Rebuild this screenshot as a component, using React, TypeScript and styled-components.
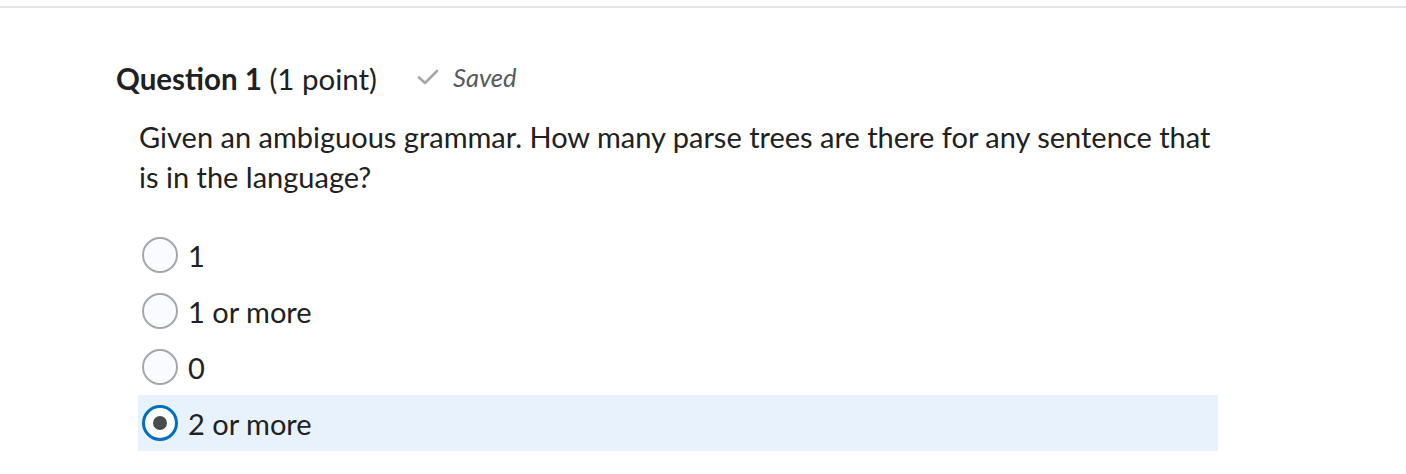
import React, { useState } from 'react'
import styled, { createGlobalStyle } from 'styled-components'

const GlobalStyle = createGlobalStyle`
  html, body {
    margin: 0;
    padding: 0;
    background: #ffffff;
  }
  body {
    font-family: Lato, "Open Sans", sans-serif;
    color: #202122;
  }
`

const options = ['1', '1 or more', '0', '2 or more']

const App = () => {
  const [picked, setPicked] = useState(3)

  return (
    <>
      <GlobalStyle />
      <Page>
        <TopRule />
        <QuestionBlock>
          <QuestionHeader>
            <Title>
              <strong>Question 1</strong> (1 point)
            </Title>
            <SavedTag>
              <svg width="22" height="18" viewBox="0 0 22 18">
                <path d="M2 9.5 L8 15 L20 3" fill="none" stroke="#a5a8ab" strokeWidth="2.6" strokeLinecap="round" strokeLinejoin="round" />
              </svg>
              <span>Saved</span>
            </SavedTag>
          </QuestionHeader>

          <QuestionBody>
            <Prompt>
              Given an ambiguous grammar. How many parse trees are there for any sentence that is in the language?
            </Prompt>

            <OptionList>
              {options.map((opt, i) => (
                <OptionRow key={opt} selected={picked === i} onClick={() => setPicked(i)}>
                  <Radio selected={picked === i} />
                  <OptionLabel>{opt}</OptionLabel>
                </OptionRow>
              ))}
            </OptionList>
          </QuestionBody>
        </QuestionBlock>
      </Page>
    </>
  )
}

export default App

const Page = styled.div`
  width: 1406px;
  height: 474px;
  overflow: hidden;
  padding-top: 6px;
  box-sizing: border-box;
`

const TopRule = styled.div`
  height: 2px;
  background: #e3e7ec;
`

const QuestionBlock = styled.div`
  padding: 50px 0 0 116px;
`

const QuestionHeader = styled.div`
  display: flex;
  align-items: center;
  gap: 40px;
  height: 40px;
`

const Title = styled.h2`
  margin: 0;
  font-size: 29.5px;
  font-weight: 400;
  color: #202122;

  strong {
    font-weight: 700;
  }
`

const SavedTag = styled.div`
  display: flex;
  align-items: center;
  gap: 14px;
  font-size: 25.5px;
  font-style: italic;
  color: #565a5c;
  margin-top: -2px;
`

const QuestionBody = styled.div`
  padding-left: 23px;
  width: 1079px;
`

const Prompt = styled.p`
  margin: 19px 0 0 0;
  font-size: 29px;
  line-height: 40px;
  color: #202122;
`

const OptionList = styled.div`
  margin-top: 30px;
  margin-left: -1px;
  display: flex;
  flex-direction: column;
`

const OptionRow = styled.label<{ selected: boolean }>`
  display: flex;
  align-items: center;
  gap: 10px;
  height: 56px;
  padding-left: 4px;
  background: ${p => (p.selected ? '#e8f2fc' : 'transparent')};
  cursor: pointer;
`

const Radio = styled.span<{ selected: boolean }>`
  width: 36px;
  height: 36px;
  border-radius: 50%;
  box-sizing: border-box;
  flex-shrink: 0;
  background: ${p => (p.selected ? '#ffffff' : '#f9fbff')};
  border: ${p => (p.selected ? '3px solid #006fbf' : '2px solid #a5a8ab')};
  display: flex;
  align-items: center;
  justify-content: center;

  &::after {
    content: '';
    display: ${p => (p.selected ? 'block' : 'none')};
    width: 14px;
    height: 14px;
    border-radius: 50%;
    background: #494c4e;
  }
`

const OptionLabel = styled.span`
  font-size: 29px;
  color: #202122;
`
